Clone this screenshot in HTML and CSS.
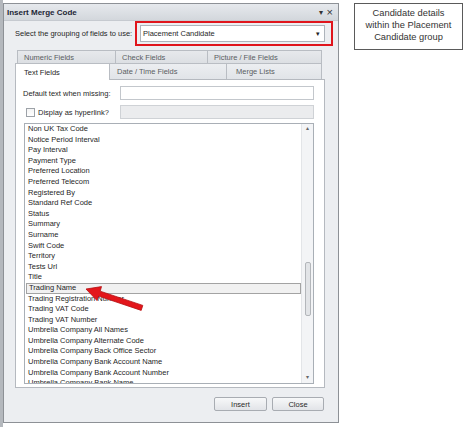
FILE: index.html
```html
<!DOCTYPE html>
<html lang="en">
<head>
    <meta charset="UTF-8">
    <title>Insert Merge Code</title>
    <link rel="stylesheet" href="styles.css">
</head>
<body>
    <div class="page">
        <div class="app-edge"></div>

        <div class="dialog">
            <div class="titlebar">
                <span class="title">Insert Merge Code</span>
                <span class="title-btn">&#9662;</span>
                <span class="title-btn close">&#215;</span>
            </div>

            <div class="group-row">
                <span class="group-label">Select the grouping of fields to use:</span>
                <div class="highlight">
                    <div class="combo">
                        <span class="combo-text">Placement Candidate</span>
                        <span class="combo-arrow">&#9662;</span>
                    </div>
                </div>
            </div>

            <div class="content">
                <div class="tab-row back">
                    <div class="tab w1">Numeric Fields</div>
                    <div class="tab w2">Check Fields</div>
                    <div class="tab w3">Picture / File Fields</div>
                </div>
                <div class="tab-row front">
                    <div class="tab active">Text Fields</div>
                    <div class="tab w5">Date / Time Fields</div>
                    <div class="tab w6">Merge Lists</div>
                </div>

                <div class="panel">
                    <div class="field-row">
                        <span class="field-label">Default text when missing:</span>
                        <div class="input"></div>
                    </div>
                    <div class="field-row">
                        <span class="field-label check-label"><span class="checkbox"></span>Display as hyperlink?</span>
                        <div class="input disabled"></div>
                    </div>

                    <div class="listbox">
                        <div class="items">
                            <div class="item">Non UK Tax Code</div>
                            <div class="item">Notice Period Interval</div>
                            <div class="item">Pay Interval</div>
                            <div class="item">Payment Type</div>
                            <div class="item">Preferred Location</div>
                            <div class="item">Preferred Telecom</div>
                            <div class="item">Registered By</div>
                            <div class="item">Standard Ref Code</div>
                            <div class="item">Status</div>
                            <div class="item">Summary</div>
                            <div class="item">Surname</div>
                            <div class="item">Swift Code</div>
                            <div class="item">Territory</div>
                            <div class="item">Tests Url</div>
                            <div class="item">Title</div>
                            <div class="item selected">Trading Name</div>
                            <div class="item">Trading Registration Number</div>
                            <div class="item">Trading VAT Code</div>
                            <div class="item">Trading VAT Number</div>
                            <div class="item">Umbrella Company All Names</div>
                            <div class="item">Umbrella Company Alternate Code</div>
                            <div class="item">Umbrella Company Back Office Sector</div>
                            <div class="item">Umbrella Company Bank Account Name</div>
                            <div class="item">Umbrella Company Bank Account Number</div>
                            <div class="item">Umbrella Company Bank Name</div>
                        </div>
                        <div class="scrollbar">
                            <span class="sb-arrow">&#9652;</span>
                            <span class="sb-thumb"></span>
                            <span class="sb-arrow down">&#9662;</span>
                        </div>
                    </div>
                </div>

                <div class="buttons">
                    <button class="btn insert">Insert</button>
                    <button class="btn close-btn">Close</button>
                </div>
            </div>
        </div>

        <div class="callout">Candidate details<br>within the Placement<br>Candidate group</div>

        <!-- red pointer drawn over the list -->
        <svg class="pointer" width="474" height="427" viewBox="0 0 474 427">
            <polygon points="86,289 101.5,286.6 100.2,291.2 142.8,305.4 141.2,310.4 98.6,296.1 97,300.6"
                     fill="#e3161b" stroke="#b40f12" stroke-width="0.8" stroke-linejoin="round"/>
        </svg>
    </div>
</body>
</html>
```

FILE: styles.css
```css
body {
    margin: 0;
    font-family: "Liberation Sans", Arial, sans-serif;
    background-color: #ffffff;
    color: #1f1f1f;
}

.page {
    position: relative;
    display: flex;
    align-items: flex-start;
    width: 474px;
    height: 427px;
    overflow: hidden;
}

.app-edge {
    width: 3px;
    height: 427px;
    background-color: #b4b8bd;
}

.dialog {
    margin-top: 3px;
    width: 334px;
    height: 418px;
    border: 1px solid #8d9196;
    background-color: #eceef1;
    display: flex;
    flex-direction: column;
}

.titlebar {
    height: 16px;
    display: flex;
    align-items: center;
    padding: 0 5px 0 3px;
    background: linear-gradient(#e6e9ed, #d3d7dc);
    border-bottom: 1px solid #c6cad0;
}

.title {
    flex: 1;
    font-size: 8px;
    font-weight: bold;
    color: #1d2635;
}

.title-btn {
    font-size: 8px;
    color: #333;
    margin-left: 4px;
}

.title-btn.close {
    font-size: 11px;
}

.group-row {
    height: 25px;
    display: flex;
    align-items: center;
    padding: 0 5px 0 11px;
}

.group-label {
    flex: 1;
    font-size: 7.5px;
}

.highlight {
    box-sizing: border-box;
    width: 198px;
    height: 25px;
    border: 2px solid #e0151c;
    padding: 2px 6px 2px 3px;
}

.combo {
    height: 17px;
    box-sizing: border-box;
    border: 1px solid #aeb4bb;
    background-color: #ffffff;
    display: flex;
    align-items: center;
    padding: 0 4px 0 2px;
    font-size: 7.5px;
}

.combo-text {
    flex: 1;
}

.combo-arrow {
    font-size: 7px;
    color: #222;
}

.content {
    margin: 4px 13px 0 11px;
    display: flex;
    flex-direction: column;
}

.tab-row {
    display: flex;
}

.tab {
    box-sizing: border-box;
    font-size: 7.5px;
    color: #5a5d62;
    border: 1px solid #b9bdc3;
    border-bottom: none;
    padding-left: 6px;
    display: flex;
    align-items: center;
}

.tab + .tab {
    border-left: none;
}

.back {
    margin: 0 3px 0 2px;
}

.back .tab {
    height: 13px;
    background: linear-gradient(#e7e9ec, #dcdfe3);
}

.w1 { width: 99px; }
.w2 { width: 92px; }
.w3 { width: 114px; }
.w5 { width: 117px; padding-left: 7px; }
.w6 { width: 95px; padding-left: 9px; }

.front {
    margin-right: 3px;
    align-items: flex-end;
}

.front .tab {
    height: 16px;
    background: linear-gradient(#eceef1, #e1e4e8);
}

.front .tab.active {
    width: 95px;
    height: 17px;
    margin-bottom: -1px;
    padding-left: 8px;
    background: #ffffff;
    color: #1f1f1f;
    position: relative;
    z-index: 1;
}

.panel {
    box-sizing: border-box;
    height: 309px;
    border: 1px solid #b5b9bf;
    background-color: #ffffff;
    padding: 6px 10px 3px 7px;
    display: flex;
    flex-direction: column;
    gap: 5px;
}

.field-row {
    display: flex;
    align-items: center;
    height: 14px;
}

.field-label {
    width: 97px;
    font-size: 7.5px;
    display: flex;
    align-items: center;
}

.checkbox {
    width: 7px;
    height: 7px;
    border: 1px solid #9da2a8;
    background: linear-gradient(#f4f4f4, #ffffff);
    margin: 0 3px 0 3px;
}

.input {
    flex: 1;
    height: 14px;
    box-sizing: border-box;
    border: 1px solid #c3c7cc;
    background-color: #ffffff;
}

.input.disabled {
    background-color: #ebecee;
    border-color: #cfd2d6;
}

.listbox {
    margin: -1px 0 0 1px;
    height: 261px;
    box-sizing: border-box;
    border: 1px solid #a9afb6;
    display: flex;
    overflow: hidden;
}

.items {
    flex: 1;
    overflow: hidden;
    padding-top: 0;
}

.item {
    height: 10.6px;
    line-height: 10.6px;
    font-size: 7.5px;
    padding-left: 3px;
    white-space: nowrap;
    box-sizing: border-box;
}

.item.selected {
    margin-left: 1px;
    padding-left: 2px;
    border: 1px solid #a3a3a3;
    background-color: #f1f1f1;
    line-height: 8.6px;
}

.scrollbar {
    width: 11px;
    background-color: #f3f4f6;
    border-left: 1px solid #e3e5e8;
    display: flex;
    flex-direction: column;
    align-items: center;
}

.sb-arrow {
    font-size: 6px;
    color: #666;
    line-height: 9px;
}

.sb-arrow.down {
    margin-top: auto;
    margin-bottom: 1px;
}

.sb-thumb {
    width: 4px;
    height: 52px;
    margin-top: 129px;
    border: 1px solid #b3b6ba;
    border-radius: 2px;
    background-color: #e2e4e7;
}

.buttons {
    display: flex;
    justify-content: flex-end;
    gap: 5px;
    margin-top: 9px;
    padding-right: 1px;
}

.btn {
    height: 14px;
    padding: 0;
    font-family: "Liberation Sans", Arial, sans-serif;
    font-size: 7.5px;
    color: #2a2a2a;
    border: 1px solid #a8acb2;
    border-radius: 2px;
    background: linear-gradient(#f7f8f9, #e2e4e8);
}

.insert { width: 53px; }
.close-btn { width: 52px; }

.callout {
    margin: 3px 0 0 15px;
    width: 107px;
    height: 42px;
    border: 1px solid #5a5a5a;
    padding-top: 3px;
    box-sizing: content-box;
    text-align: center;
    font-size: 9.3px;
    line-height: 12px;
    color: #333;
}

.pointer {
    position: absolute;
    left: 0;
    top: 0;
    pointer-events: none;
}
```
